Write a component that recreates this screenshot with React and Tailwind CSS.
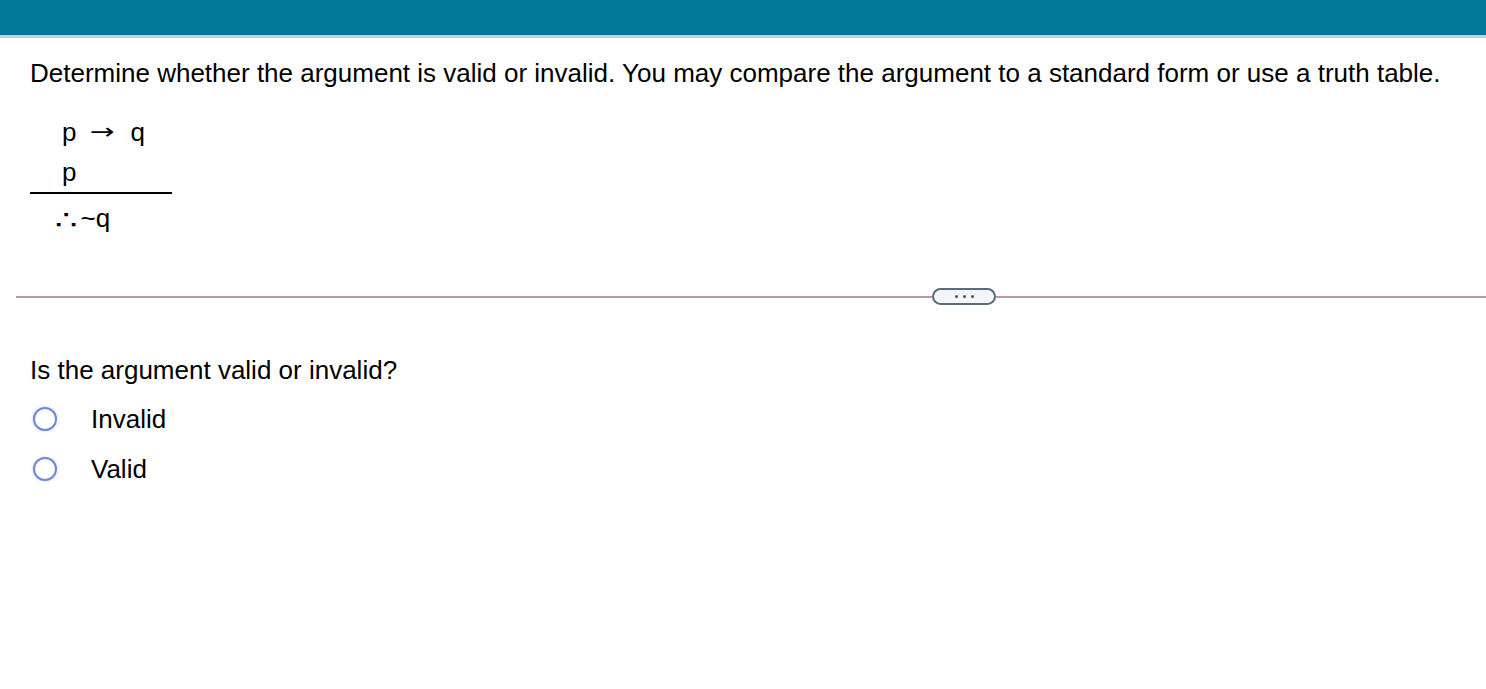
export default function App() {
  return (
    <div className="min-h-screen bg-white text-black" style={{ fontFamily: '"Liberation Sans", Arial, sans-serif' }}>
      <div className="h-[35px] bg-[#037899]" />
      <div className="h-[3px] bg-[#c9ced6]" />

      <div className="pl-[30px] pt-[20px]">
        <p className="text-[26px] leading-[30px]">
          Determine whether the argument is valid or invalid. You may compare the argument to a standard form or use a truth table.
        </p>

        <div className="mt-[29px] w-[142px] text-[26px] leading-[30px]">
          <div className="flex items-center h-[30px] pl-[32px]">
            <span>p</span>
            <span
              className="ml-[14px] w-[26px] inline-block text-[22px] scale-x-[1.35] origin-left"
              style={{ fontFamily: '"DejaVu Sans", sans-serif' }}
            >
              →
            </span>
            <span className="ml-[14px]">q</span>
          </div>
          <div className="h-[30px] mt-[10px] pl-[32px]">p</div>
          <div className="h-[2px] bg-black mt-[5px]" />
          <div className="mt-[9px] pl-[25px] h-[30px] flex items-center">
            <span
              className="inline-block text-[26px] leading-[30px] scale-x-[1.35] origin-left translate-y-[2px]"
              style={{ fontFamily: '"DejaVu Sans", sans-serif' }}
            >
              ∴
            </span>
            <span className="ml-[9px]">~q</span>
          </div>
        </div>
      </div>

      <div className="mt-[55px] ml-[16px] flex items-center">
        <div className="h-[2px] flex-1 bg-[#b99aa6]" />
        <div className="w-[64px] h-[17px] rounded-full border-2 border-[#5c6b78] bg-[#f3f5f8] flex items-center justify-center gap-[5px]">
          <span className="w-[3px] h-[3px] rounded-full bg-[#4a5560]" />
          <span className="w-[3px] h-[3px] rounded-full bg-[#4a5560]" />
          <span className="w-[3px] h-[3px] rounded-full bg-[#4a5560]" />
        </div>
        <div className="h-[2px] w-[490px] bg-[#b99aa6]" />
      </div>

      <div className="pl-[30px] pt-[50px]">
        <p className="text-[26px] leading-[30px]">Is the argument valid or invalid?</p>
        <div className="mt-[19px] flex flex-col gap-[20px]">
          {["Invalid", "Valid"].map((o) => (
            <label key={o} className="flex items-center h-[30px]">
              <span className="ml-[3px] w-[24px] h-[24px] rounded-full border-[2.5px] border-[#7088dc] shadow-[0_0_3px_#c6d0f3] bg-white" />
              <span className="ml-[34px] text-[26px] leading-[30px]">{o}</span>
            </label>
          ))}
        </div>
      </div>
    </div>
  );
}
